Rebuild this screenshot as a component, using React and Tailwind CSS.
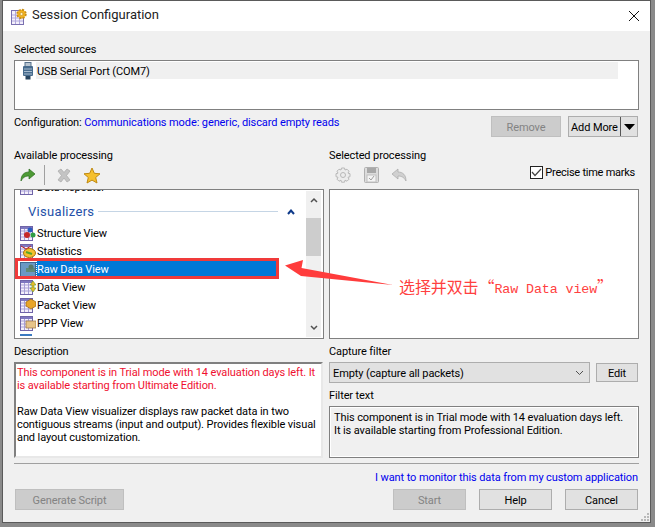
import React from "react";

function Sheet({ children, size = 16 }) {
  return (
    <svg width={size} height={size} viewBox="0 0 16 16" className="shrink-0">
      <rect x="0.500" y="1.500" width="12" height="14" fill="#f4f0fb" stroke="#6f64a8" />
      <path d="M1 6h11M1 9h11M1 12h11M4.500 2v13M8.500 2v13" stroke="#a79fd6" strokeWidth="1" fill="none" />
      <rect x="1" y="2" width="11" height="2" fill="#7f78c0" />
      {children}
    </svg>
  );
}

function SerialIcon() {
  return (
    <svg width="12" height="18" viewBox="0 0 12 18" className="shrink-0">
      <rect x="3" y="0.500" width="6" height="4" fill="#b8c4d0" stroke="#55708a" />
      <rect x="1" y="4" width="10" height="10" rx="1" fill="#466a8c" />
      <path d="M2 7h8M2 9.500h8M2 12h8" stroke="#a9bdd0" />
      <rect x="3.500" y="14" width="5" height="3.500" fill="#27445f" />
    </svg>
  );
}

function Btn({ children, disabled, className = "" }) {
  return (
    <div
      className={
        "flex items-center justify-center border h-[21px] pt-px " +
        (disabled
          ? "bg-[#cccccc] border-[#bfbfbf] text-[#838383] "
          : "bg-[#e1e1e1] border-[#adadad] text-black ") +
        className
      }
    >
      {children}
    </div>
  );
}

function Row({ icon, label, selected }) {
  return (
    <div className="flex items-center h-[18px] pl-[5px]">
      {icon}
      <span
        className={
          "flex-1 h-[18px] leading-[20px] " +
          (selected ? "bg-[#0078d7] text-white border-l border-dotted border-white" : "pl-px")
        }
      >
        {label}
      </span>
    </div>
  );
}

function Annotation() {
  return (
    <>
      <div className="absolute left-[15px] top-[258px] w-[264px] h-[21px] border-[3px] border-[#f03a3a]" />
      <svg className="absolute left-[280px] top-[255px]" width="120" height="36" viewBox="0 0 120 36">
        <polygon points="5,10.500 23,5 21.500,13 113,30 21,21" fill="#ff3c3c" />
      </svg>
      <div className="absolute left-[399px] top-[277px] whitespace-nowrap text-[#ff4040] text-[16px] leading-[18px] [font-family:'Noto_Sans_CJK_SC',sans-serif]">
        选择并双击“<span className="text-[13.33px] [font-family:'Liberation_Mono',monospace]">Raw Data view</span>”
      </div>
    </>
  );
}

export default function App() {
  return (
    <div className="relative w-[655px] h-[527px] overflow-hidden bg-[#8a8a8a] text-[11px] tracking-[-0.1px] leading-[13px] text-black [font-family:'Roboto',sans-serif]">
      <div className="w-[649px] h-[523px] ml-[2px] bg-[#f0f0f0] border-l border-t border-r border-b border-[#5a5a5a] relative">
        {/* Title bar */}
        <div className="flex items-center h-[30px] bg-white pl-[8px] pr-[8px]">
          <svg width="17" height="17" viewBox="0 0 17 17" className="shrink-0">
            <rect x="0.500" y="2.500" width="12" height="14" fill="#f4f0fb" stroke="#7a70b0" />
            <path d="M1 7h11M1 10h11M1 13h11M4.500 3v13M8.500 3v13" stroke="#b0a8dc" />
            <circle cx="10.500" cy="6" r="4.200" fill="#f2b321" stroke="#c98e14" strokeWidth="2" strokeDasharray="2 1.300" />
            <circle cx="10.500" cy="6" r="3.300" fill="#f2b321" />
            <circle cx="10.500" cy="6" r="1.500" fill="#fff3c4" stroke="#b07a10" strokeWidth="0.500" />
          </svg>
          <span className="ml-[4px] text-[13px] tracking-[0px] text-[#222] leading-[14px] mb-[2px]">Session Configuration</span>
          <svg width="12" height="12" viewBox="0 0 12 12" className="ml-auto mr-[2px]">
            <path d="M1 1l10 10M11 1L1 11" stroke="#111" strokeWidth="1" fill="none" />
          </svg>
        </div>

        <div className="pl-[11px] pr-[12px] pt-[11px]">
          <div className="h-[14px] leading-[16px]">Selected sources</div>
          <div className="h-[50px] mt-[4px] mr-[-1px] border border-[#808080] bg-white pt-px pl-[7px] pr-[20px]">
            <div className="flex items-center h-[17px]">
              <SerialIcon />
              <div className="flex-1 ml-[2px] h-[17px] leading-[20px] bg-[#f0f0f0] pl-px">USB Serial Port (COM7)</div>
            </div>
          </div>

          <div className="flex mt-[6px] h-[22px]">
            <div className="flex-1 leading-[14px]">
              Configuration: <span className="text-[#0000ee]">Communications mode: generic, discard empty reads</span>
            </div>
            <Btn disabled className="w-[70px]">Remove</Btn>
            <div className="ml-[7px] w-[70px] h-[21px] flex items-center border border-[#adadad] bg-[#e1e1e1] pl-[2px] pt-px">
              <span className="flex-1 whitespace-nowrap">Add More</span>
              <div className="w-px h-[19px] mt-[-1px] bg-[#555]" />
              <svg width="14" height="8" viewBox="0 0 14 8" className="mr-[1px] ml-[1px]">
                <polygon points="2,1 13,1 7.500,7" fill="#000" />
              </svg>
            </div>
          </div>

          <div className="grid grid-cols-[310px_310px] gap-x-[5px] mt-[10px]">
            {/* Available processing */}
            <div>
              <div className="h-[14px] leading-[16px]">Available processing</div>
              <div className="flex items-center h-[20px] mt-[3px] pl-[6px]">
                <svg width="16" height="14" viewBox="0 0 16 14">
                  <path d="M1 13C1 7 4 4 9 4V1l6 5-6 5V8C6 8 3 9 1 13z" fill="#4d9a35" stroke="#2b6b1d" strokeWidth="0.700" />
                </svg>
                <div className="w-px h-[20px] bg-[#a0a0a0] ml-[8px]" />
                <svg width="16" height="15" viewBox="0 0 16 15" className="ml-[11px]">
                  <path d="M2 3l3-2 3 3.500L11 1l3 2-3.500 4.500L14 12l-3 2-3-4-3 4-3-2 3.500-4.500z" fill="#c4c4c4" stroke="#a8a8a8" strokeWidth="0.700" />
                </svg>
                <svg width="18" height="17" viewBox="0 0 18 17" className="ml-[11px]">
                  <polygon points="9,1 11.300,6.300 17,6.800 12.700,10.500 14,16 9,13.100 4,16 5.300,10.500 1,6.800 6.700,6.300" fill="#f5c02e" stroke="#c08a12" />
                </svg>
              </div>
              <div className="flex h-[150px] mt-[4px] border border-[#808080] bg-white overflow-hidden">
                <div className="flex-1 min-w-0 overflow-hidden">
                  <div className="relative h-[6px]">
                    <div className="absolute left-0 right-0 bottom-0">
                      <Row label="Data Repeater" icon={<Sheet />} />
                    </div>
                  </div>
                  <div className="flex items-center h-[28px] pt-[3px] pl-[13px] pr-[11px]">
                    <span className="text-[13px] tracking-[0.3px] text-[#2450a8]">Visualizers</span>
                    <div className="flex-1 h-px bg-[#c5d5e5] ml-[4px]" />
                    <svg width="8" height="6" viewBox="0 0 8 6" className="ml-[9px]">
                      <path d="M1 5l3-3.500L7 5" stroke="#0e3a8a" strokeWidth="2" fill="none" />
                    </svg>
                  </div>
                  <div className="pr-[29px]">
                    <Row label="Structure View" icon={<Sheet><circle cx="10" cy="5" r="2.500" fill="#2a5bc0" /><circle cx="7" cy="10" r="3" fill="#c62828" /><circle cx="13" cy="10" r="2.500" fill="#2f9e44" /></Sheet>} />
                    <Row label="Statistics" icon={<Sheet><ellipse cx="9.500" cy="10" rx="6" ry="4.500" fill="#f5c02e" stroke="#a87510" /><path d="M6 9l6 2" stroke="#59a52c" strokeWidth="2" /><path d="M1 3l5 3 5-3" stroke="#c62828" fill="none" /></Sheet>} />
                    <Row selected label="Raw Data View" icon={<svg width="16" height="16" viewBox="0 0 16 16" className="shrink-0"><rect x="0.500" y="1.500" width="15" height="14" fill="#6a98c4" stroke="#40688f" /><path d="M6 7h9v4H6z" fill="#5f8a78" /><circle cx="11" cy="6" r="2.500" fill="#587a66" /></svg>} />
                    <Row label="Data View" icon={<Sheet><path d="M13 2l3 4h-2v3l2 0-3 4-3-4h2V6h-2z" fill="#e8b92a" stroke="#5e9a30" strokeWidth="0.600" /></Sheet>} />
                    <Row label="Packet View" icon={<Sheet><path d="M6 5l5-3 5 3v4l-5 3-5-3z" fill="#e8a52a" stroke="#9a6410" strokeWidth="0.700" /></Sheet>} />
                    <Row label="PPP View" icon={<Sheet><path d="M6 6h10v7H6z" fill="#e6c48a" stroke="#9a7440" strokeWidth="0.700" /></Sheet>} />
                    <div className="h-[18px] pl-[5px] pt-[2px]">
                      <div className="w-[12px] h-[2px] bg-[#3a7ac0]" />
                    </div>
                  </div>
                </div>
                <div className="flex flex-col w-[15px] my-px mr-[2px] bg-[#f0f0f0] items-center shrink-0">
                  <svg width="8" height="6" viewBox="0 0 8 6" className="mt-[6px]">
                    <path d="M1 5l3-3 3 3" stroke="#505050" strokeWidth="1.500" fill="none" />
                  </svg>
                  <div className="w-full h-[38px] mt-[15px] bg-[#cdcdcd]" />
                  <svg width="8" height="6" viewBox="0 0 8 6" className="mt-auto mb-[6px]">
                    <path d="M1 1l3 3 3-3" stroke="#505050" strokeWidth="1.500" fill="none" />
                  </svg>
                </div>
              </div>
            </div>

            {/* Selected processing */}
            <div>
              <div className="h-[14px] leading-[16px]">Selected processing</div>
              <div className="flex items-center h-[20px] mt-[3px] pl-[6px]">
                <svg width="16" height="16" viewBox="0 0 16 16">
                  <path d="M6.500 1h3l.5 2 2-.8 2 2-1 1.900 2 .6v3l-2 .6 1 1.900-2 2-2-1-.5 2h-3l-.5-2-2 1-2-2 1-1.900-2-.6v-3l2-.6-1-1.900 2-2 2 .8z" fill="#ececec" stroke="#b8b8b8" />
                  <circle cx="8" cy="8" r="2.500" fill="none" stroke="#b8b8b8" />
                </svg>
                <svg width="15" height="16" viewBox="0 0 15 16" className="ml-[13px]">
                  <rect x="0.500" y="0.500" width="14" height="15" rx="1" fill="#dcdcdc" stroke="#b0b0b0" />
                  <rect x="3" y="1" width="9" height="5" fill="#a8a8a8" />
                  <rect x="3" y="8" width="9" height="7" fill="#f4f4f4" stroke="#c0c0c0" />
                  <path d="M5 11l2 2 3-4" stroke="#a0a0a0" fill="none" />
                </svg>
                <svg width="16" height="14" viewBox="0 0 16 14" className="ml-[12px]">
                  <path d="M15 13C15 7 12 4 7 4V1L1 6l6 5V8c3 0 6 1 8 5z" fill="#d0d0d0" stroke="#a8a8a8" strokeWidth="0.700" />
                </svg>
                <div className="ml-auto mt-[-6px] flex items-center pr-[4px]">
                  <div className="w-[13px] h-[13px] border border-[#222] bg-white flex items-center justify-center">
                    <svg width="11" height="9" viewBox="0 0 11 9">
                      <path d="M1 4l3 3.500L10 1" stroke="#444" strokeWidth="1.200" fill="none" />
                    </svg>
                  </div>
                  <span className="ml-[2px] tracking-[-0.25px]">Precise time marks</span>
                </div>
              </div>
              <div className="h-[150px] mt-[4px] border border-[#808080] bg-white" />
            </div>

            {/* Description */}
            <div className="mt-[5px] col-start-1">
              <div className="h-[14px] leading-[16px]">Description</div>
              <div className="h-[96px] mt-[4px] mr-[1px] border-2 border-[#808080] border-r-[#e8e8e8] border-b-[#e8e8e8] bg-white pl-px pt-[2px] pr-[2px]">
                <p className="text-[#f01030]">This component is in Trial mode with 14 evaluation days left. It is available starting from Ultimate Edition.</p>
                <p className="mt-[13px]">Raw Data View visualizer displays raw packet data in two contiguous streams (input and output). Provides flexible visual and layout customization.</p>
              </div>
            </div>

            {/* Capture filter */}
            <div className="mt-[5px] col-start-2 row-start-2">
              <div className="h-[14px] leading-[16px]">Capture filter</div>
              <div className="flex mt-[4px] items-center">
                <div className="flex items-center w-[261px] h-[21px] border border-[#adadad] bg-[#e1e1e1] pl-[3px] pr-[5px] pt-px">
                  <span className="flex-1">Empty (capture all packets)</span>
                  <svg width="9" height="6" viewBox="0 0 9 6">
                    <path d="M1 1l3.500 3.500L8 1" stroke="#505050" fill="none" />
                  </svg>
                </div>
                <Btn className="ml-[6px] w-[42px] !h-[19px]">Edit</Btn>
              </div>
              <div className="h-[14px] leading-[16px] mt-[5px]">Filter text</div>
              <div className="h-[52px] mt-[4px] border border-[#808080] shadow-[inset_0_0_0_1px_white] bg-[#f0f0f0] pl-[4px] pt-[4px]">
                <p className="w-[296px]">This component is in Trial mode with 14 evaluation days left. It is available starting from Professional Edition.</p>
              </div>
            </div>
          </div>

          <div className="h-px bg-[#a0a0a0] mt-[5px] mr-[-1px]" />
          <div className="h-[14px] leading-[14px] mt-[7px] text-right text-[#0000ee]">I want to monitor this data from my custom application</div>
          <div className="flex mt-[4px] pl-px">
            <Btn disabled className="w-[109px]">Generate Script</Btn>
            <Btn disabled className="ml-auto w-[73px]">Start</Btn>
            <Btn className="ml-[13px] w-[73px]">Help</Btn>
            <Btn className="ml-[13px] w-[73px]">Cancel</Btn>
          </div>
        </div>
        <svg className="absolute right-0 bottom-0" width="10" height="10" viewBox="0 0 10 10">
          <path d="M7 1h2v2H7zM4 4h2v2H4zM7 4h2v2H7zM1 7h2v2H1zM4 7h2v2H4zM7 7h2v2H7z" fill="#b8b8b8" />
        </svg>
      </div>
      <Annotation />
    </div>
  );
}
